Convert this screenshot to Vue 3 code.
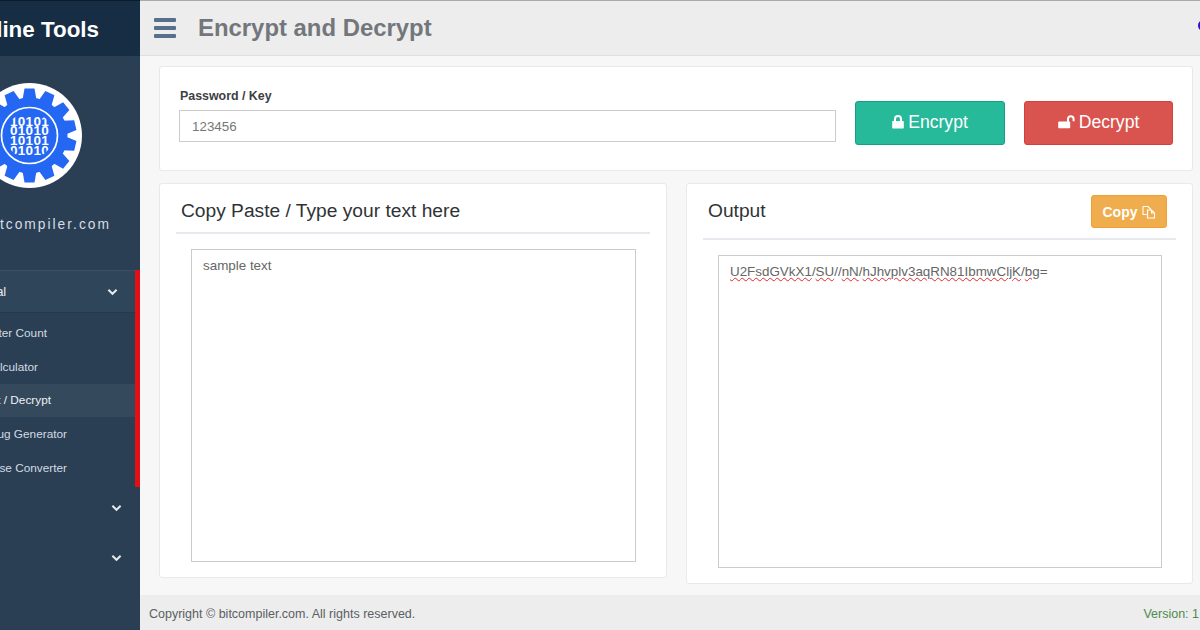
<script setup>
const items = [
  { label: 'Character Count' },
  { label: 'Calculator' },
  { label: 'Encrypt / Decrypt', active: true },
  { label: 'Slug Generator' },
  { label: 'Case Converter' }
]
const teeth = Array.from({ length: 14 }, (_, i) => i * (360 / 14))
const binary = [
  { text: '10101', y: 42.5 },
  { text: '01010', y: 52 },
  { text: '10101', y: 61.5 },
  { text: '01010', y: 71.5 }
]
const squiggles = ['U2FsdGVkX1', '/', 'SU', '//', 'nN', '/', 'hJhvplv3aqRN81IbmwCljK', '/', 'bg']
</script>

<template>
  <div class="page">
    <aside class="sidebar">
      <div class="brand"><span>Online Tools</span></div>
      <svg class="logo" viewBox="0 0 105 105" width="105" height="105">
        <defs>
          <clipPath id="disc"><circle cx="52.5" cy="52.5" r="23.5" /></clipPath>
        </defs>
        <circle cx="52.5" cy="52.5" r="52.5" fill="#fff" />
        <circle cx="52.5" cy="52.5" r="38" fill="#2467f2" />
        <polygon v-for="a in teeth" :key="a" points="47.5,5.500 57.500,5.500 59.500,17 45.500,17" fill="#2467f2" :transform="`rotate(${a} 52.5 52.5)`" />
        <circle cx="52.5" cy="52.5" r="28" fill="#2467f2" stroke="#fff" stroke-width="1.700" />
        <g clip-path="url(#disc)">
          <text v-for="row in binary" :key="row.y" x="52.5" :y="row.y" class="bits" text-anchor="middle">{{ row.text }}</text>
        </g>
      </svg>
      <div class="site"><span>bitcompiler.com</span></div>
      <nav class="menu">
        <div class="group">
          <div class="group-head">
            <span class="clip-label">General</span>
            <svg class="chev" viewBox="0 0 12 8" width="11" height="8"><path d="M1.5 1.5 6 6l4.500-4.500" fill="none" stroke="currentColor" stroke-width="2.200" /></svg>
          </div>
          <div class="sub">
            <div v-for="it in items" :key="it.label" class="sub-item" :class="{ active: it.active }"><span>{{ it.label }}</span></div>
          </div>
        </div>
        <div class="closed"><svg class="chev" viewBox="0 0 12 8" width="11" height="8"><path d="M1.5 1.5 6 6l4.500-4.500" fill="none" stroke="currentColor" stroke-width="2.200" /></svg></div>
        <div class="closed"><svg class="chev" viewBox="0 0 12 8" width="11" height="8"><path d="M1.5 1.5 6 6l4.500-4.500" fill="none" stroke="currentColor" stroke-width="2.200" /></svg></div>
      </nav>
    </aside>

    <main class="main">
      <header class="topbar">
        <div class="burger"><i></i><i></i><i></i></div>
        <h1>Encrypt and Decrypt</h1>
        <span class="dot"></span>
      </header>

      <div class="content">
        <section class="panel key-panel">
          <div class="field">
            <label for="pw">Password / Key</label>
            <input id="pw" value="123456" />
          </div>
          <button class="btn green">
            <svg viewBox="0 0 12 14" width="12" height="14"><path d="M2 6V4a4 4 0 0 1 8 0v2h1c.5 0 .8.300.8.800v6c0 .5-.3.800-.8.800H1c-.5 0-.8-.3-.8-.8v-6c0-.5.300-.8.800-.8zM4 6h4V4a2 2 0 0 0-4 0z" fill="#fff" fill-rule="evenodd" /></svg>
            Encrypt
          </button>
          <button class="btn red">
            <svg viewBox="0 0 17 14" width="17" height="14"><path d="M1 6.500h8V4a3.800 3.800 0 0 1 7.600 0v2.300h-2V4a1.800 1.800 0 0 0-3.600 0v2.500h.4c.5 0 .8.300.8.800v5.200c0 .5-.3.800-.8.800H1c-.5 0-.8-.3-.8-.8V7.300c0-.5.300-.8.800-.8z" fill="#fff" /></svg>
            Decrypt
          </button>
        </section>

        <div class="columns">
          <section class="panel col left">
            <h2 class="col-head">Copy Paste / Type your text here</h2>
            <textarea class="area" spellcheck="false">sample text</textarea>
          </section>
          <section class="panel col right">
            <div class="col-head out-head">
              <h2>Output</h2>
              <button class="copy">
                Copy
                <svg viewBox="0 0 14 14" width="14" height="14"><path d="M1 1.500h5l2.500 2.500v1.500M1 1.500v8h3.500M5.500 5h4l3 3v5h-7zM9.500 5v3h3" fill="none" stroke="#fff" stroke-width="1.100" /></svg>
              </button>
            </div>
            <div class="area output">
              <template v-for="(s, i) in squiggles" :key="i"><span :class="{ wavy: s.length > 1 && s !== '//' }">{{ s }}</span></template>=
            </div>
          </section>
        </div>
      </div>

      <footer class="footer">
        <span>Copyright © bitcompiler.com. All rights reserved.</span>
        <span class="version">Version: 1</span>
      </footer>
    </main>
  </div>
</template>

<style>
html, body { margin: 0; background: #f7f7f7; }
</style>

<style scoped>
.page {
  display: flex;
  width: 1200px;
  height: 630px;
  overflow: hidden;
  font-family: "Liberation Sans", Arial, sans-serif;
  color: #555;
}
.sidebar {
  width: 140px;
  flex: none;
  background: #2a3f54;
  overflow: hidden;
  display: flex;
  flex-direction: column;
}
.brand {
  flex: none;
  background: #172d44;
  border-top: 1px solid #0d1a28;
  display: flex;
  justify-content: flex-end;
  align-items: center;
  padding-right: 41px;
  color: #fff;
  font-weight: 700;
  font-size: 22.400px;
  white-space: nowrap;
  box-sizing: border-box;
  height: 56px;
  padding-top: 3px;
}
.logo {
  flex: none;
  margin: 27px 0 0 -23px;
}
.site {
  margin-top: 27px;
  height: 20px;
  display: flex;
  justify-content: flex-end;
  padding-right: 29px;
  color: #d6dde4;
  font-size: 13.800px;
  line-height: 20px;
  letter-spacing: 2px;
  white-space: nowrap;
}
.menu { margin-top: 35px; }
.group {
  border-right: 5px solid #e30f14;
  height: 217px;
  box-sizing: border-box;
}
.group-head {
  height: 43px;
  box-sizing: border-box;
  background: #2f4559;
  border-top: 1px solid #3b4f62;
  border-bottom: 1px solid #26394c;
  display: flex;
  align-items: center;
  justify-content: space-between;
  padding-right: 17px;
  color: #e7ebef;
  font-size: 13px;
}
.clip-label { margin-left: -40px; white-space: nowrap; }
.chev { color: #e5e9ed; flex: none; }
.sub { padding-top: 3.500px; }
.sub-item {
  height: 33.600px;
  display: flex;
  justify-content: flex-end;
  align-items: center;
  color: #d3dbe3;
  font-size: 11.800px;
  white-space: nowrap;
}
.sub-item:nth-child(1) span { margin-right: 88px; }
.sub-item:nth-child(2) span { margin-right: 97px; }
.sub-item:nth-child(3) span { margin-right: 84px; }
.sub-item:nth-child(4) span { margin-right: 68px; }
.sub-item:nth-child(5) span { margin-right: 68px; }
.sub-item.active { background: #34495c; color: #eef1f4; }
.closed {
  height: 42px;
  margin-bottom: 8px;
  display: flex;
  align-items: center;
  justify-content: flex-end;
  padding-right: 18px;
}
.main {
  flex: 1;
  min-width: 0;
  display: flex;
  flex-direction: column;
  background: #f7f7f7;
}
.topbar {
  height: 56px;
  flex: none;
  box-sizing: border-box;
  background: #ededed;
  border-top: 1px solid #aaa;
  border-bottom: 1px solid #dfdfdf;
  display: flex;
  align-items: center;
  padding: 0 0 0 14px;
}
.burger {
  width: 22px;
  display: flex;
  flex-direction: column;
  gap: 4px;
}
.burger i {
  display: block;
  height: 4px;
  border-radius: 1px;
  background: #56708c;
}
h1 {
  margin: 0 0 0 22px;
  font-size: 23.900px;
  font-weight: 700;
  color: #73777b;
}
.dot {
  width: 11px;
  height: 11px;
  border-radius: 50%;
  background: #2a10d0;
  margin-left: auto;
  margin-right: -9px;
  margin-top: -5px;
}
.content {
  flex: 1;
  min-height: 0;
  padding: 10px 7px 0 19px;
  display: flex;
  flex-direction: column;
}
.panel {
  background: #fff;
  border: 1px solid #e6e9ed;
  box-sizing: border-box;
  border-radius: 3px;
}
.key-panel {
  height: 105px;
  flex: none;
  display: flex;
  align-items: flex-start;
  padding: 22px 19px 0 19px;
}
.field { width: 657px; margin-right: 19px; flex: none; }
label {
  display: block;
  font-size: 12.400px;
  font-weight: 700;
  color: #3c4043;
  line-height: 15px;
  margin-bottom: 6px;
  padding-left: 1px;
}
input {
  display: block;
  width: 100%;
  height: 32px;
  box-sizing: border-box;
  border: 1px solid #ccc;
  padding: 0 12px;
  font: 13.400px "Liberation Sans", Arial, sans-serif;
  color: #777;
  outline: none;
}
.btn {
  height: 44px;
  margin-top: 12px;
  flex: none;
  width: 150px;
  border-radius: 3px;
  font: 17.600px "Liberation Sans", Arial, sans-serif;
  color: #fff;
  display: flex;
  align-items: center;
  justify-content: center;
  gap: 4px;
  padding: 0 0 2px;
}
.btn.green { background: #26b99a; border: 1px solid #169f85; margin-right: 19px; }
.btn.red { background: #d9534f; border: 1px solid #d43f3a; width: 149px; }
.columns {
  display: flex;
  align-items: flex-start;
  gap: 19px;
  margin-top: 12px;
}
.col { width: 508px; padding: 0 16px; display: flex; flex-direction: column; }
.col.left { height: 395px; }
.col.right { width: 507px; height: 401px; }
h2 {
  margin: 0;
  font-size: 19.200px;
  font-weight: 400;
  color: #2f3336;
}
.col-head {
  height: 50px;
  box-sizing: border-box;
  border-bottom: 2px solid #e6e9ed;
  line-height: 54px;
  padding-left: 5px;
  flex: none;
}
.out-head {
  height: 56px;
  display: flex;
  justify-content: space-between;
  align-items: flex-start;
  padding: 0 9px 0 5px;
}
.copy {
  margin-top: 11px;
  width: 76px;
  height: 33px;
  border: 1px solid #eea236;
  background: #f0ad4e;
  border-radius: 3px;
  color: #fff;
  font: 700 14px "Liberation Sans", Arial, sans-serif;
  display: flex;
  align-items: center;
  justify-content: center;
  gap: 4px;
  padding: 0;
}
.area {
  display: block;
  box-sizing: border-box;
  width: 445px;
  height: 313px;
  margin: 15px 0 0 15px;
  border: 1px solid #ccc;
  padding: 8px 11px;
  font: 13.400px/16px "Liberation Sans", Arial, sans-serif;
  color: #666;
  resize: none;
  outline: none;
  background: #fff;
}
.output { white-space: nowrap; width: 444px; }
.wavy {
  text-decoration: underline wavy #e0282e 1px;
  text-underline-offset: 1px;
}
.footer {
  height: 35px;
  flex: none;
  box-sizing: border-box;
  background: #ededed;
  display: flex;
  justify-content: space-between;
  align-items: center;
  padding: 2px 1px 0 9px;
  font-size: 12.500px;
  color: #5a5f64;
}
.version { color: #4d8a4d; }
.bits {
  font-family: "Liberation Sans", sans-serif;
  font-weight: 700;
  font-size: 13.500px;
  letter-spacing: 0.3px;
  fill: #fff;
}
</style>
